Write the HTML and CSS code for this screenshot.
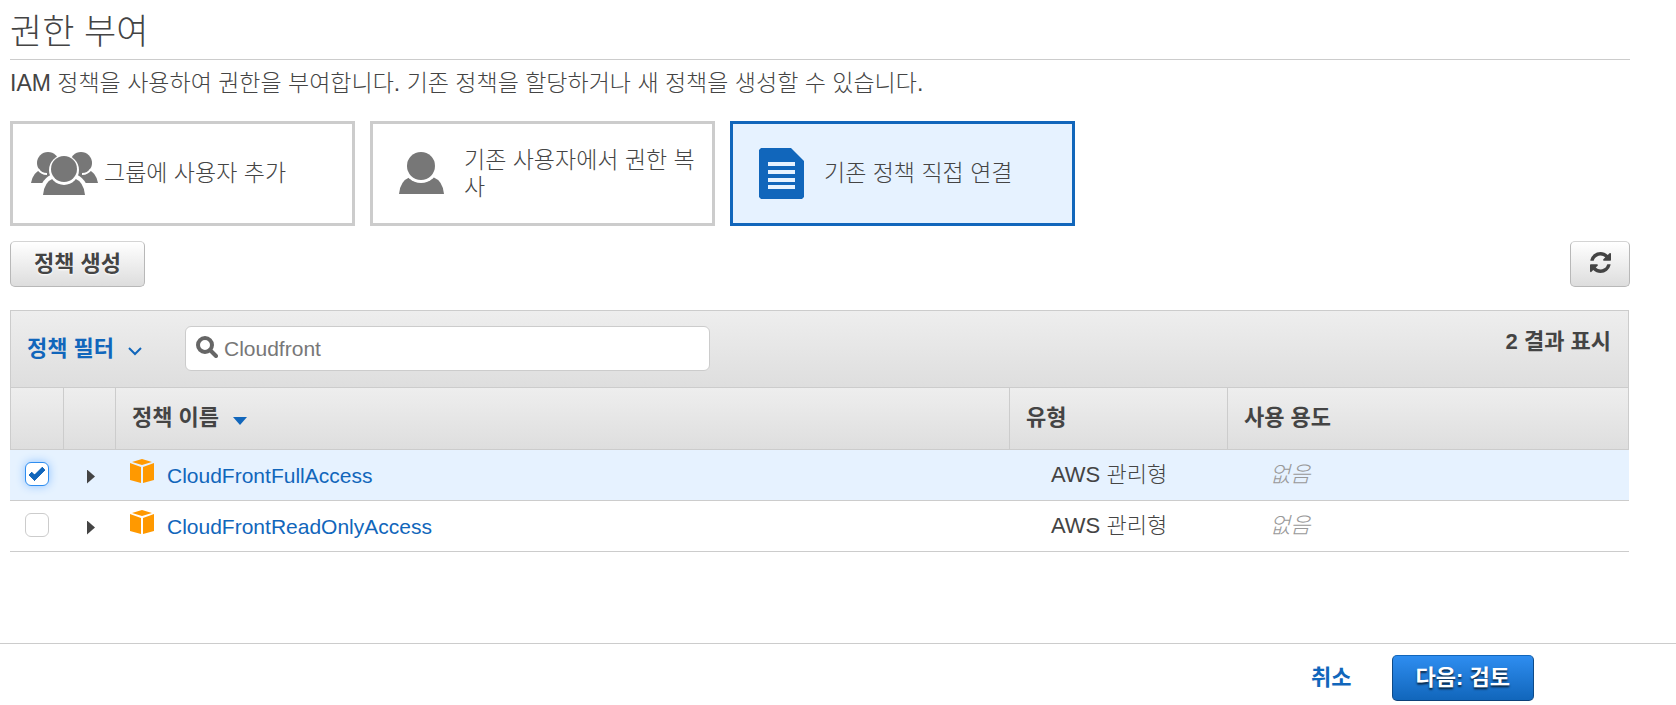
FILE: index.html
```html
<!DOCTYPE html>
<html lang="ko">

<head>
    <meta charset="UTF-8">
    <title>권한 부여</title>
    <link rel="stylesheet" href="styles.css">
</head>

<body>

    <main class="content">
        <h1>권한 부여</h1>
        <p class="description">IAM 정책을 사용하여 권한을 부여합니다. 기존 정책을 할당하거나 새 정책을 생성할 수 있습니다.</p>

        <!-- 권한 부여 방식 선택 -->
        <div class="options">
            <button type="button" class="option">
                <svg class="option-icon wide" viewBox="0 0 68 43" fill="#777">
                    <circle cx="17" cy="11" r="11" />
                    <circle cx="50" cy="11" r="11" />
                    <path d="M0 31q2-11 10-13h14v13zM67 31q-2-11-10-13H43v13z" />
                    <path d="M7 17q3 5 9 5M60 17q-3 5-9 5" fill="none" stroke="#fff" stroke-width="2" />
                    <path d="M8 43q1-17 16-22h18q15 5 16 22z" fill="#fff" />
                    <path d="M12 43q1-13 11-17h20q10 4 11 17z" />
                    <ellipse cx="33" cy="18" rx="15" ry="15" fill="#fff" />
                    <ellipse cx="33" cy="17" rx="13" ry="13" />
                </svg>
                <span>그룹에 사용자 추가</span>
            </button>
            <button type="button" class="option">
                <svg class="option-icon" viewBox="0 0 45 43" fill="#777">
                    <path d="M0 42q1-13 11-17h23q10 4 11 17z" />
                    <ellipse cx="22" cy="15" rx="17" ry="16" fill="#fff" />
                    <ellipse cx="22" cy="14" rx="14" ry="14" />
                </svg>
                <span>기존 사용자에서 권한 복사</span>
            </button>
            <button type="button" class="option selected">
                <svg class="option-icon" viewBox="0 0 45 51">
                    <path d="M2 0h30l13 13v36l-2 2H2l-2-2V2z" fill="#1166bb" />
                    <path d="M9 16h27M9 24h27M9 32h27M9 39h27" stroke="#e6f2ff" stroke-width="4" />
                </svg>
                <span>기존 정책 직접 연결</span>
            </button>
        </div>

        <div class="toolbar">
            <button type="button" class="button">정책 생성</button>
            <button type="button" class="button refresh" aria-label="새로 고침">
                <svg width="21" height="21" viewBox="0 0 1536 1536">
                    <path fill="#444" d="M1511 928q0 5-1 7-64 268-268 434.500T764 1536q-146 0-282.500-55T238 1324l-129 129q-19 19-45 19t-45-19-19-45V960q0-26 19-45t45-19h448q26 0 45 19t19 45-19 45l-137 137q71 66 161 102t187 36q134 0 250-65t186-179q11-17 53-117 8-23 30-23h192q13 0 22.500 9.500t9.500 22.500zm25-800v448q0 26-19 45t-45 19h-448q-26 0-45-19t-19-45 19-45l138-138Q969 256 768 256q-134 0-250 65T332 500q-11 17-53 117-8 23-30 23H50q-13 0-22.500-9.500T18 608v-7q65-268 270-434.500T768 0q146 0 284 55.500T1297 212l130-129q19-19 45-19t45 19 19 45z" />
                </svg>
            </button>
        </div>

        <!-- 필터 -->
        <div class="filter-bar">
            <button type="button" class="filter-button">정책 필터
                <svg width="14" height="9" viewBox="0 0 14 9" fill="none" stroke="#1166bb" stroke-width="2">
                    <path d="M1 1l6 6 6-6" />
                </svg>
            </button>
            <label class="search">
                <svg width="22" height="22" viewBox="0 0 22 22" fill="none" stroke="#666">
                    <circle cx="9" cy="9" r="7" stroke-width="4" />
                    <path d="M14 14l6 6" stroke-width="4" stroke-linecap="round" />
                </svg>
                <input type="text" value="Cloudfront" aria-label="검색">
            </label>
            <span class="count">2 결과 표시</span>
        </div>

        <!-- 정책 목록 -->
        <table class="policies">
            <colgroup>
                <col class="col-check">
                <col class="col-expand">
                <col>
                <col class="col-type">
                <col class="col-usage">
            </colgroup>
            <thead>
                <tr>
                    <th></th>
                    <th></th>
                    <th>정책 이름 <svg class="sort" width="14" height="8" viewBox="0 0 14 8"><path d="M0 0h14L7 8z" fill="#1166bb" /></svg></th>
                    <th>유형</th>
                    <th>사용 용도</th>
                </tr>
            </thead>
            <tbody>
                <tr class="checked">
                    <td><input type="checkbox" class="check" aria-label="CloudFrontFullAccess" checked></td>
                    <td><button type="button" class="expand" aria-label="펼치기"></button></td>
                    <td>
                        <div class="name">
                            <svg class="cube" width="24" height="24" viewBox="0 0 24 24" fill="#ff9900">
                                <path d="M12 0l10 3-10 3L2 3zM0 4l11 4v16L0 21zM24 4L13 8v16l11-3z" />
                            </svg>
                            <a href="#">CloudFrontFullAccess</a>
                        </div>
                    </td>
                    <td class="type">AWS 관리형</td>
                    <td class="usage">없음</td>
                </tr>
                <tr>
                    <td><input type="checkbox" class="check" aria-label="CloudFrontReadOnlyAccess"></td>
                    <td><button type="button" class="expand" aria-label="펼치기"></button></td>
                    <td>
                        <div class="name">
                            <svg class="cube" width="24" height="24" viewBox="0 0 24 24" fill="#ff9900">
                                <path d="M12 0l10 3-10 3L2 3zM0 4l11 4v16L0 21zM24 4L13 8v16l11-3z" />
                            </svg>
                            <a href="#">CloudFrontReadOnlyAccess</a>
                        </div>
                    </td>
                    <td class="type">AWS 관리형</td>
                    <td class="usage">없음</td>
                </tr>
            </tbody>
        </table>
    </main>

    <footer class="footer">
        <a href="#" class="cancel">취소</a>
        <button type="button" class="button primary">다음: 검토</button>
    </footer>

</body>

</html>
```
FILE: styles.css
```css
* {
    box-sizing: border-box;
}

body {
    margin: 0;
    background: #fff;
    color: #444;
    font-family: "Liberation Sans", "Noto Sans CJK KR", sans-serif;
    font-size: 21px;
    font-weight: 300;
    line-height: 27px;
}

button,
input {
    font: inherit;
    color: inherit;
}

button {
    cursor: pointer;
}

svg {
    display: block;
    flex: none;
}

a {
    color: #1166bb;
    text-decoration: none;
}

.content {
    margin: 0 46px 0 10px;
}

h1 {
    margin: 0;
    padding: 12px 0 7px;
    border-bottom: 1px solid #ccc;
    font-size: 35px;
    font-weight: 300;
    line-height: 40px;
}

.description {
    margin: 10px 0 24px;
    font-size: 23px;
}

/* 선택 카드 */
.options {
    display: flex;
    gap: 15px;
}

.option {
    display: flex;
    align-items: center;
    gap: 20px;
    width: 345px;
    height: 105px;
    padding: 0 10px 0 26px;
    border: 3px solid #ccc;
    background: #fff;
    font-size: 23px;
    text-align: left;
    word-break: break-all;
}

.option.selected {
    border-color: #1166bb;
    background: #e6f2ff;
}

.option-icon {
    width: 45px;
}

.option-icon.wide {
    width: 68px;
    margin: 0 -15px 0 -8px;
}

/* 버튼 */
.toolbar {
    display: flex;
    justify-content: space-between;
    margin: 15px 0 23px;
}

.button {
    height: 46px;
    padding: 0 23px 2px;
    border: 1px solid #b8b8b8;
    border-top-color: #d4d4d4;
    border-radius: 5px;
    background: linear-gradient(#fff, #ddd);
    font-size: 22px;
    font-weight: bold;
    text-shadow: 0 1px 2px #fff;
}

.button.refresh {
    display: flex;
    align-items: center;
    justify-content: center;
    width: 60px;
    padding: 0 0 3px;
}

.button.primary {
    border-color: #1166bb #0d4a88 #0d4078;
    background: linear-gradient(#2e8df0, #1166bb);
    color: #fff;
    text-shadow: 0 2px 2px rgba(0, 0, 0, 0.7);
}

.filter-bar {
    display: flex;
    align-items: center;
    height: 77px;
    margin-right: 1px;
    padding: 0 17px 2px 16px;
    border: 1px solid #ccc;
    border-bottom: 0;
    background: linear-gradient(#eee, #dedede);
}

.filter-button {
    display: flex;
    align-items: center;
    gap: 14px;
    width: 158px;
    padding: 0;
    border: 0;
    background: none;
    color: #1166bb;
    font-size: 22px;
    font-weight: bold;
}

.filter-button svg {
    margin-top: 6px;
}

.search {
    display: flex;
    align-items: center;
    gap: 6px;
    width: 525px;
    height: 45px;
    padding: 0 10px;
    border: 1px solid #ccc;
    border-radius: 6px;
    background: #fff;
}

.search svg {
    margin-bottom: 3px;
}

.search input {
    flex: 1;
    padding: 0;
    border: 0;
    outline: 0;
    color: #777;
}

.count {
    align-self: flex-start;
    margin: 17px 0 0 auto;
    font-size: 22px;
    font-weight: bold;
}

/* 테이블 */
.policies {
    width: calc(100% - 1px);
    border-spacing: 0;
    table-layout: fixed;
}

.col-check {
    width: 53px;
}

.col-expand {
    width: 52px;
}

.col-type {
    width: 218px;
}

.col-usage {
    width: 402px;
}

.policies th {
    height: 63px;
    padding: 0 16px 2px;
    border: solid #ccc;
    border-width: 1px 0 1px 1px;
    background: linear-gradient(#eee, #dedede);
    font-size: 22px;
    text-align: left;
}

.policies th:last-child {
    border-right-width: 1px;
}

.sort {
    display: inline-block;
    margin-left: 8px;
}

.policies td {
    height: 51px;
    padding: 0 15px;
    border-bottom: 1px solid #ccc;
}

.checked td {
    background: #e6f2ff;
}

.check {
    display: block;
    appearance: none;
    width: 24px;
    height: 24px;
    margin: 0 0 2px;
    border: 1px solid #ccc;
    border-radius: 6px;
    background: #fff;
}

.check:checked {
    border-color: #2e8df0;
    box-shadow: 0 0 10px #8fc3ff;
}

.check:checked::before {
    content: "";
    display: block;
    width: 11px;
    height: 4px;
    margin: 5px 0 0 3px;
    border: solid #1166bb;
    border-width: 0 0 5px 5px;
    border-radius: 1px;
    transform: rotate(-45deg);
}

.expand {
    display: block;
    width: 8px;
    height: 14px;
    margin: 3px 0 0 9px;
    padding: 0;
    border: 0;
    background: #444;
    clip-path: polygon(0 0, 100% 50%, 0 100%);
}

.name {
    display: flex;
    align-items: center;
    gap: 13px;
}

.cube {
    margin-bottom: 8px;
}

.policies .type,
.policies .usage {
    padding-bottom: 2px;
    font-size: 22px;
}

.policies .type {
    padding-left: 42px;
}

.policies .usage {
    padding-left: 43px;
    color: #999;
    font-style: italic;
}

.footer {
    display: flex;
    align-items: center;
    justify-content: flex-end;
    gap: 40px;
    margin-top: 91px;
    padding: 11px 142px 4px 0;
    border-top: 1px solid #ccc;
}

.cancel {
    padding-bottom: 2px;
    font-size: 22px;
    font-weight: bold;
}
```
